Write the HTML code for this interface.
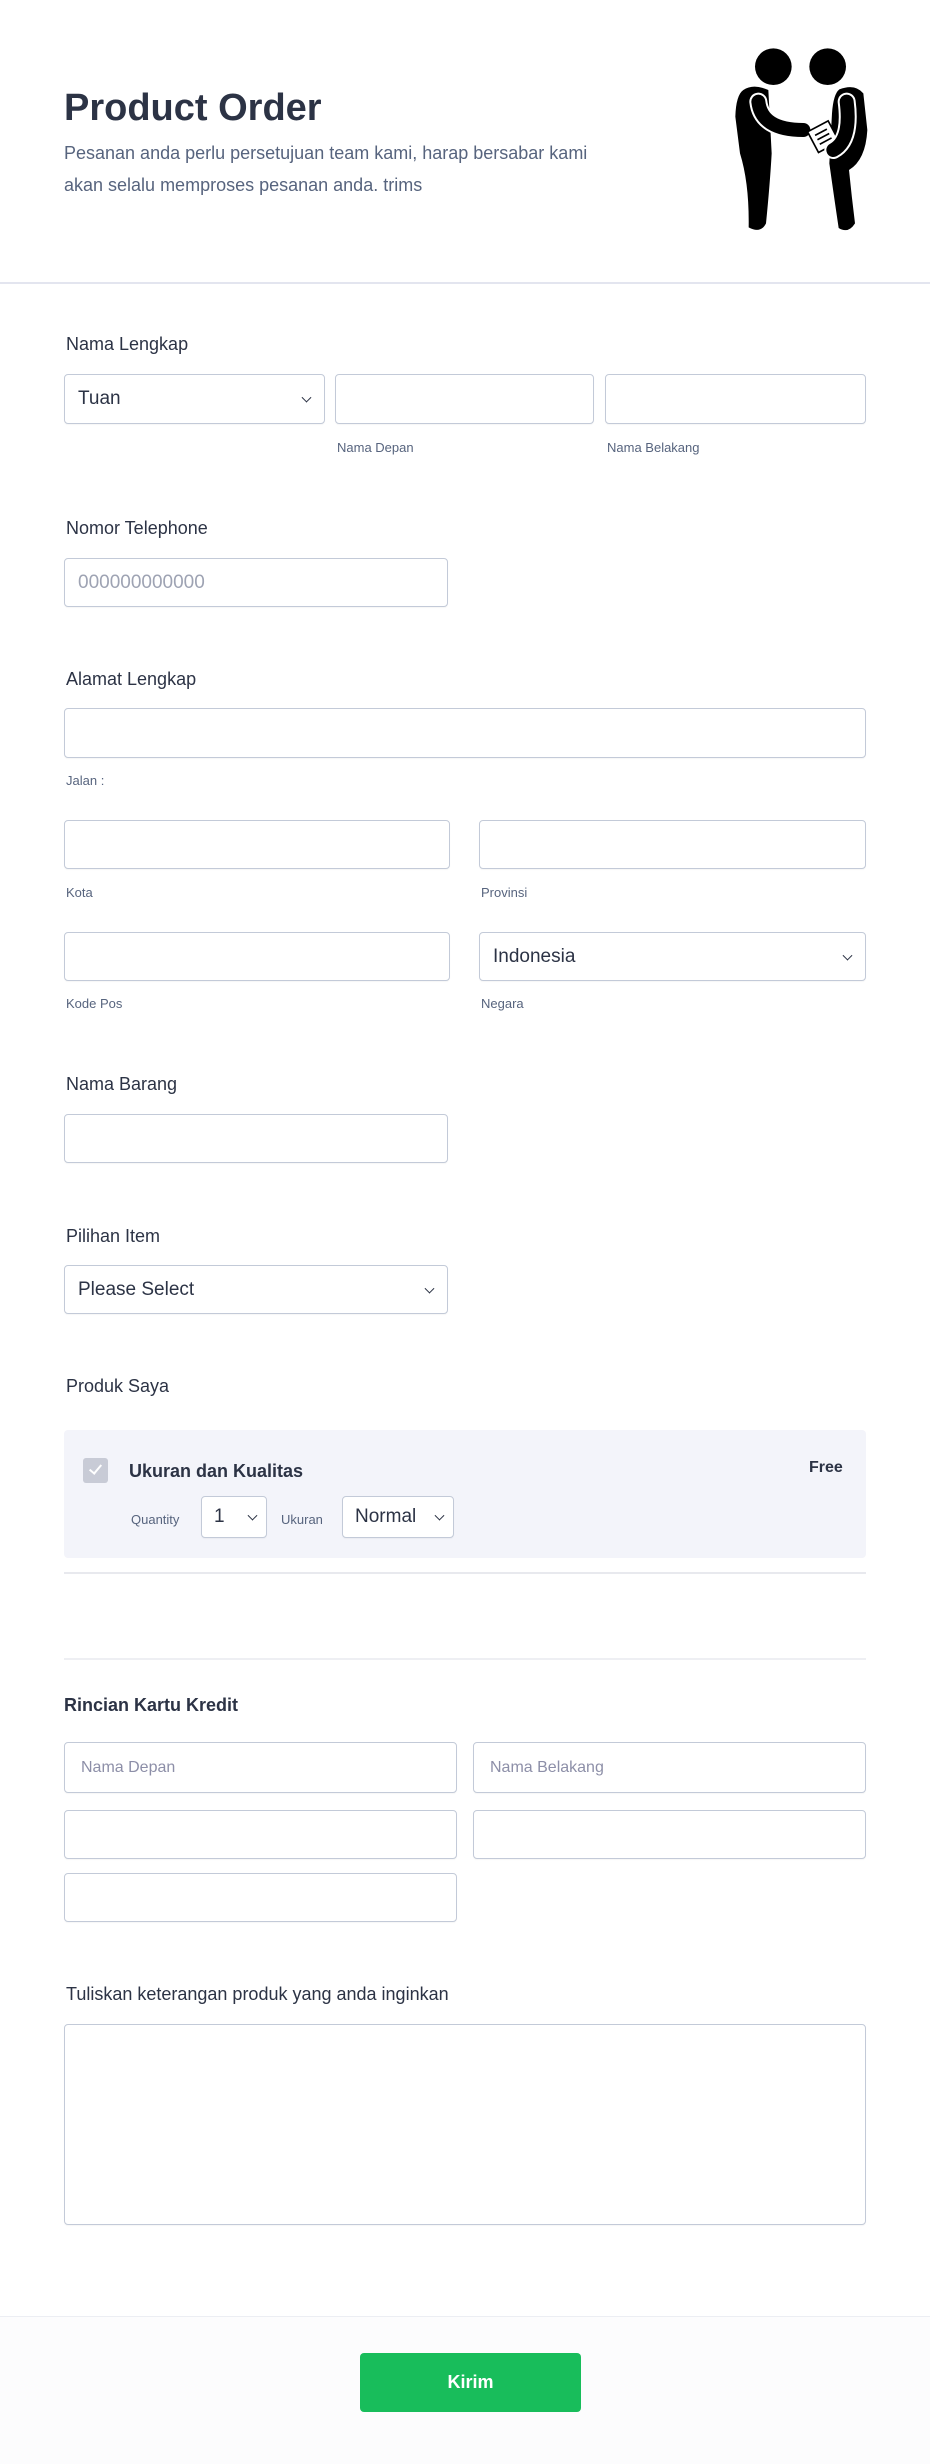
<!DOCTYPE html>
<html><head><meta charset="utf-8"><style>
*{box-sizing:border-box;margin:0;padding:0}
body{width:930px;height:2464px;background:#fff;font-family:"Liberation Sans",sans-serif;color:#2c3345;position:relative;overflow:hidden}
.a{position:absolute}
.lbl{position:absolute;left:66px;font-size:18px;font-weight:500;color:#2c3345}
.in{position:absolute;border:1px solid #c3cad8;border-radius:4px;background:#fff;box-shadow:0 1px 1px rgba(0,0,0,.04)}
.sub{position:absolute;font-size:13px;color:#57647e}
.sel{font-size:19px;color:#2c3345;padding-left:13px;display:flex;align-items:center}
.chev{position:absolute;right:14px;top:50%;width:7px;height:7px;border-right:1.5px solid #2c3345;border-bottom:1.5px solid #2c3345;transform:translateY(-70%) rotate(45deg)}
.ph{font-size:16px;color:#8d8fa8;padding-left:16px;display:flex;align-items:center}
</style></head><body>
<div class="a" style="left:64px;top:87px;font-size:38px;font-weight:600;color:#2c3345">Product Order</div>
<div class="a" style="left:64px;top:137px;font-size:18px;line-height:32px;color:#57647e;width:640px">Pesanan anda perlu persetujuan team kami, harap bersabar kami<br>akan selalu memproses pesanan anda. trims</div>
<svg class="a" style="left:700px;top:30px" width="200" height="220" viewBox="0 0 600 660">
<circle cx="220" cy="110" r="55" fill="#000"/><circle cx="383" cy="110" r="55" fill="#000"/>
<path d="M130,180 Q160,160 205,180 L215,370 Q210,460 198,580 Q182,612 146,592 Q148,460 120,370 L106,260 Q108,195 130,180Z" fill="#000"/>
<path d="M418,178 Q465,160 490,190 L502,300 Q497,390 447,420 Q455,500 465,580 Q445,612 416,594 Q402,500 388,400 L396,250 Q400,192 418,178Z" fill="#000"/>
<path d="M175,215 Q185,300 310,300" stroke="#fff" stroke-width="54" fill="none" stroke-linecap="round"/>
<path d="M175,215 Q185,300 310,300" stroke="#000" stroke-width="42" fill="none" stroke-linecap="round"/>
<g transform="rotate(-28 370 320)"><rect x="335" y="285" width="70" height="70" fill="#fff" stroke="#000" stroke-width="5"/><path d="M350,305h40M350,320h40M350,335h40" stroke="#000" stroke-width="5"/></g>
<path d="M440,215 Q455,330 400,360" stroke="#fff" stroke-width="54" fill="none" stroke-linecap="round"/>
<path d="M440,215 Q455,330 400,360" stroke="#000" stroke-width="42" fill="none" stroke-linecap="round"/>
</svg>
<div class="a" style="left:0;top:282px;width:930px;height:2px;background:#e3e5ef"></div>

<div class="lbl" style="top:334px">Nama Lengkap</div>
<div class="in sel" style="left:64px;top:374px;width:261px;height:50px">Tuan<span class="chev"></span></div>
<div class="in" style="left:335px;top:374px;width:259px;height:50px"></div>
<div class="in" style="left:605px;top:374px;width:261px;height:50px"></div>
<div class="sub" style="left:337px;top:440px">Nama Depan</div>
<div class="sub" style="left:607px;top:440px">Nama Belakang</div>

<div class="lbl" style="top:518px">Nomor Telephone</div>
<div class="in ph" style="left:64px;top:558px;width:384px;height:49px;font-size:19px;padding-left:13px;color:#9ea3b3">000000000000</div>

<div class="lbl" style="top:669px">Alamat Lengkap</div>
<div class="in" style="left:64px;top:708px;width:802px;height:50px"></div>
<div class="sub" style="left:66px;top:773px">Jalan :</div>
<div class="in" style="left:64px;top:820px;width:386px;height:49px"></div>
<div class="in" style="left:479px;top:820px;width:387px;height:49px"></div>
<div class="sub" style="left:66px;top:885px">Kota</div>
<div class="sub" style="left:481px;top:885px">Provinsi</div>
<div class="in" style="left:64px;top:932px;width:386px;height:49px"></div>
<div class="in sel" style="left:479px;top:932px;width:387px;height:49px">Indonesia<span class="chev"></span></div>
<div class="sub" style="left:66px;top:996px">Kode Pos</div>
<div class="sub" style="left:481px;top:996px">Negara</div>

<div class="lbl" style="top:1074px">Nama Barang</div>
<div class="in" style="left:64px;top:1114px;width:384px;height:49px"></div>

<div class="lbl" style="top:1226px">Pilihan Item</div>
<div class="in sel" style="left:64px;top:1265px;width:384px;height:49px">Please Select<span class="chev"></span></div>

<div class="lbl" style="top:1376px">Produk Saya</div>
<div class="a" style="left:64px;top:1430px;width:802px;height:128px;background:#f3f4fa;border-radius:4px"></div>
<div class="a" style="left:83px;top:1458px;width:25px;height:25px;background:#c8cbd6;border-radius:3px"></div>
<div class="a" style="left:92px;top:1462px;width:7px;height:12px;border-right:2px solid #fff;border-bottom:2px solid #fff;transform:rotate(40deg)"></div>
<div class="a" style="left:129px;top:1461px;font-size:18px;font-weight:700">Ukuran dan Kualitas</div>
<div class="a" style="left:809px;top:1459px;font-size:16px;font-weight:700">Free</div>
<div class="sub" style="left:131px;top:1512px">Quantity</div>
<div class="in sel" style="left:201px;top:1496px;width:66px;height:42px;padding-left:12px">1<span class="chev" style="right:10px"></span></div>
<div class="sub" style="left:281px;top:1512px">Ukuran</div>
<div class="in sel" style="left:342px;top:1496px;width:112px;height:42px;padding-left:12px">Normal<span class="chev" style="right:10px"></span></div>
<div class="a" style="left:64px;top:1572px;width:802px;height:2px;background:#e8e9ee"></div>
<div class="a" style="left:64px;top:1658px;width:802px;height:2px;background:#eeeff3"></div>

<div class="a" style="left:64px;top:1695px;font-size:18px;font-weight:700">Rincian Kartu Kredit</div>
<div class="in ph" style="left:64px;top:1742px;width:393px;height:51px">Nama Depan</div>
<div class="in ph" style="left:473px;top:1742px;width:393px;height:51px">Nama Belakang</div>
<div class="in" style="left:64px;top:1810px;width:393px;height:49px"></div>
<div class="in" style="left:473px;top:1810px;width:393px;height:49px"></div>
<div class="in" style="left:64px;top:1873px;width:393px;height:49px"></div>

<div class="lbl" style="top:1984px">Tuliskan keterangan produk yang anda inginkan</div>
<div class="in" style="left:64px;top:2024px;width:802px;height:201px"></div>

<div class="a" style="left:0;top:2316px;width:930px;height:148px;background:#fcfcfd;border-top:1px solid #eceef3"></div>
<div class="a" style="left:360px;top:2353px;width:221px;height:59px;background:#18bd5b;border-radius:4px;color:#fff;font-size:18px;font-weight:600;display:flex;align-items:center;justify-content:center">Kirim</div>
</body></html>
